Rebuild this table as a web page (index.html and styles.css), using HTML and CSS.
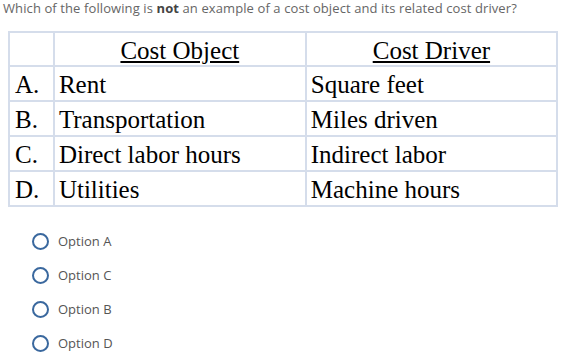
FILE: index.html
```html
<!DOCTYPE html>
<html>
<head>
<meta charset="utf-8">
<link rel="stylesheet" href="styles.css">
</head>
<body>
<div class="question">Which of the following is <b>not</b> an example of a cost object and its related cost driver?</div>
<table class="grid">
  <tr class="head">
    <td class="letter"></td>
    <td class="col"><u>Cost Object</u></td>
    <td class="col"><u>Cost Driver</u></td>
  </tr>
  <tr><td class="letter">A.</td><td>Rent</td><td>Square feet</td></tr>
  <tr><td class="letter">B.</td><td>Transportation</td><td>Miles driven</td></tr>
  <tr><td class="letter">C.</td><td>Direct labor hours</td><td>Indirect labor</td></tr>
  <tr><td class="letter">D.</td><td>Utilities</td><td>Machine hours</td></tr>
</table>
<ul class="options">
  <li><span class="radio"></span>Option A</li>
  <li><span class="radio"></span>Option C</li>
  <li><span class="radio"></span>Option B</li>
  <li><span class="radio"></span>Option D</li>
</ul>
</body>
</html>
```
FILE: styles.css
```css
html, body {
  margin: 0;
  padding: 0;
  background: #fff;
}
.question {
  font-family: "Open Sans", "Lato", sans-serif;
  font-size: 13px;
  letter-spacing: 0.1px;
  color: #666;
  padding: 0 0 0 3px;
  line-height: 16px;
}
.question b {
  color: #444;
  font-weight: 700;
}
.grid {
  margin: 15px 0 0 8px;
  width: 550px;
  border-collapse: collapse;
  font-family: "Liberation Serif", "Times New Roman", serif;
  font-size: 25px;
  color: #000;
}
.grid td {
  border: 2px solid #d5ddeb;
  padding: 0 4px 1px;
  height: 32px;
  line-height: 28px;
  vertical-align: bottom;
}
.grid .letter {
  width: 34px;
  padding-left: 5px;
}
.grid .head td {
  height: 32px;
  padding-bottom: 0;
  text-align: center;
}
.grid .col {
  width: 243px;
}
.options {
  list-style: none;
  margin: 17px 0 0 0;
  padding: 0 0 0 32px;
  font-family: "Open Sans", "Lato", sans-serif;
  font-size: 13px;
  color: #555;
}
.options li {
  display: flex;
  align-items: center;
  height: 34px;
}
.radio {
  box-sizing: border-box;
  width: 17px;
  height: 17px;
  border: 2.5px solid #3a689e;
  border-radius: 50%;
  margin-right: 9px;
}
```
